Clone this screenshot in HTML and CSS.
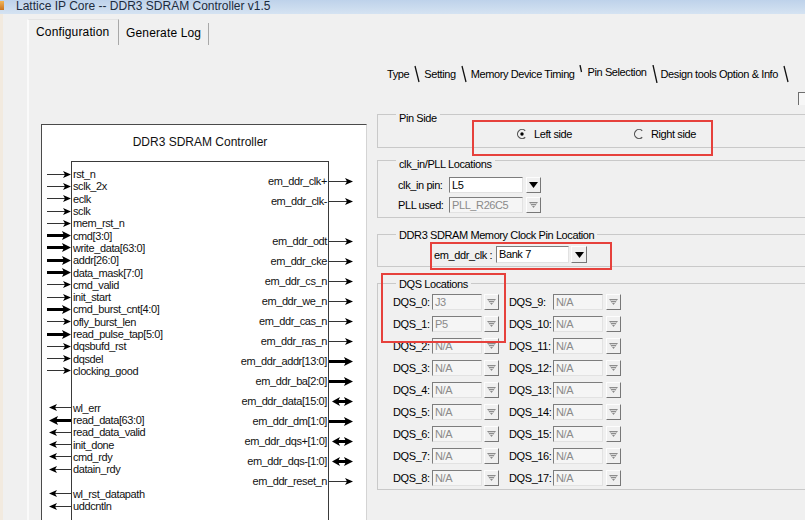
FILE: index.html
```html
<!DOCTYPE html>
<html lang="en">
<head>
<meta charset="utf-8">
<title>Lattice IP Core -- DDR3 SDRAM Controller v1.5</title>
<link rel="stylesheet" href="styles.css">
</head>
<body>
<svg class="defs" aria-hidden="true">
  <symbol id="r1" viewBox="0 0 24 11"><line x1="0" y1="5.5" x2="18" y2="5.5" stroke="#333" stroke-width="1"/><path d="M24 5.5 L16 2 L18 5.5 L16 9 Z" fill="#000"/></symbol>
  <symbol id="r3" viewBox="0 0 24 11"><line x1="0" y1="5.5" x2="17" y2="5.5" stroke="#000" stroke-width="3"/><path d="M24 5.5 L15 1 L17 5.5 L15 10 Z" fill="#000"/></symbol>
  <symbol id="l1" viewBox="0 0 24 11"><line x1="8" y1="5.5" x2="24" y2="5.5" stroke="#333" stroke-width="1"/><path d="M2 5.5 L10 2 L8 5.5 L10 9 Z" fill="#000"/></symbol>
  <symbol id="l3" viewBox="0 0 24 11"><line x1="8" y1="5.5" x2="24" y2="5.5" stroke="#000" stroke-width="3"/><path d="M2 5.5 L11 1 L9 5.5 L11 10 Z" fill="#000"/></symbol>
  <symbol id="bi" viewBox="0 0 24 11"><line x1="8" y1="5.5" x2="17" y2="5.5" stroke="#000" stroke-width="3"/><path d="M3 5.5 L11 1 L9 5.5 L11 10 Z" fill="#000"/><path d="M24 5.5 L15 1 L17 5.5 L15 10 Z" fill="#000"/></symbol>
  <symbol id="dd-on" viewBox="0 0 9 6"><path d="M0 0 H9 L4.5 6 Z" fill="#000"/></symbol>
  <symbol id="dd-off" viewBox="0 0 9 6"><path d="M0 0 H9 L4.5 6 Z" fill="#8c8c8c"/><path d="M1.5 1.5 H7.5 M3 3.5 H6" stroke="#e8e8e8" stroke-width="0.8"/></symbol>
</svg>

<div class="titlebar"><span class="ticon"></span><span class="ttext">Lattice IP Core -- DDR3 SDRAM Controller v1.5</span></div>

<div class="frame">
  <div class="edge"></div>
  <div class="main">
    <div class="tabstrip">
      <div class="tab active">Configuration</div>
      <div class="tab">Generate Log</div>
    </div>

    <div class="panel">
      <div class="leftcol">
        <div class="outer">
          <div class="dtitle">DDR3 SDRAM Controller</div>
          <div class="inner">
            <div class="lcol">
              <div class="lrow"><svg><use href="#r1"/></svg><span>rst_n</span></div>
              <div class="lrow"><svg><use href="#r1"/></svg><span>sclk_2x</span></div>
              <div class="lrow"><svg><use href="#r1"/></svg><span>eclk</span></div>
              <div class="lrow"><svg><use href="#r1"/></svg><span>sclk</span></div>
              <div class="lrow"><svg><use href="#r1"/></svg><span>mem_rst_n</span></div>
              <div class="lrow"><svg><use href="#r3"/></svg><span>cmd[3:0]</span></div>
              <div class="lrow"><svg><use href="#r3"/></svg><span>write_data[63:0]</span></div>
              <div class="lrow"><svg><use href="#r3"/></svg><span>addr[26:0]</span></div>
              <div class="lrow"><svg><use href="#r3"/></svg><span>data_mask[7:0]</span></div>
              <div class="lrow"><svg><use href="#r1"/></svg><span>cmd_valid</span></div>
              <div class="lrow"><svg><use href="#r1"/></svg><span>init_start</span></div>
              <div class="lrow"><svg><use href="#r3"/></svg><span>cmd_burst_cnt[4:0]</span></div>
              <div class="lrow"><svg><use href="#r1"/></svg><span>ofly_burst_len</span></div>
              <div class="lrow"><svg><use href="#r3"/></svg><span>read_pulse_tap[5:0]</span></div>
              <div class="lrow"><svg><use href="#r1"/></svg><span>dqsbufd_rst</span></div>
              <div class="lrow"><svg><use href="#r1"/></svg><span>dqsdel</span></div>
              <div class="lrow"><svg><use href="#r1"/></svg><span>clocking_good</span></div>
              <div class="lrow"></div>
              <div class="lrow"></div>
              <div class="lrow"><svg><use href="#l1"/></svg><span>wl_err</span></div>
              <div class="lrow"><svg><use href="#l3"/></svg><span>read_data[63:0]</span></div>
              <div class="lrow"><svg><use href="#l1"/></svg><span>read_data_valid</span></div>
              <div class="lrow"><svg><use href="#l1"/></svg><span>init_done</span></div>
              <div class="lrow"><svg><use href="#l1"/></svg><span>cmd_rdy</span></div>
              <div class="lrow"><svg><use href="#l1"/></svg><span>datain_rdy</span></div>
              <div class="lrow"></div>
              <div class="lrow"><svg><use href="#l1"/></svg><span>wl_rst_datapath</span></div>
              <div class="lrow"><svg><use href="#l1"/></svg><span>uddcntln</span></div>
            </div>
            <div class="rcol">
              <div class="rrow"><span>em_ddr_clk+</span><svg><use href="#r1"/></svg></div>
              <div class="rrow"><span>em_ddr_clk-</span><svg><use href="#r1"/></svg></div>
              <div class="rrow"></div>
              <div class="rrow"><span>em_ddr_odt</span><svg><use href="#r1"/></svg></div>
              <div class="rrow"><span>em_ddr_cke</span><svg><use href="#r1"/></svg></div>
              <div class="rrow"><span>em_ddr_cs_n</span><svg><use href="#r1"/></svg></div>
              <div class="rrow"><span>em_ddr_we_n</span><svg><use href="#r1"/></svg></div>
              <div class="rrow"><span>em_ddr_cas_n</span><svg><use href="#r1"/></svg></div>
              <div class="rrow"><span>em_ddr_ras_n</span><svg><use href="#r1"/></svg></div>
              <div class="rrow"><span>em_ddr_addr[13:0]</span><svg><use href="#r3"/></svg></div>
              <div class="rrow"><span>em_ddr_ba[2:0]</span><svg><use href="#r3"/></svg></div>
              <div class="rrow"><span>em_ddr_data[15:0]</span><svg><use href="#bi"/></svg></div>
              <div class="rrow"><span>em_ddr_dm[1:0]</span><svg><use href="#r3"/></svg></div>
              <div class="rrow"><span>em_ddr_dqs+[1:0]</span><svg><use href="#bi"/></svg></div>
              <div class="rrow"><span>em_ddr_dqs-[1:0]</span><svg><use href="#bi"/></svg></div>
              <div class="rrow"><span>em_ddr_reset_n</span><svg><use href="#r1"/></svg></div>
            </div>
          </div>
        </div>
      </div>

      <div class="rightcol">
        <div class="subtabs">
          <span class="st">Type</span><svg class="sl"><line x1="1" y1="1" x2="5" y2="17"/></svg>
          <span class="st">Setting</span><svg class="sl"><line x1="1" y1="1" x2="5" y2="17"/></svg>
          <span class="st">Memory Device Timing</span><svg class="sl short"><line x1="2" y1="0" x2="3.5" y2="7"/></svg>
          <span class="st sel">Pin Selection</span><svg class="sl tall"><line x1="1" y1="0" x2="5" y2="18"/></svg>
          <span class="st">Design tools Option &amp; Info</span><svg class="sl"><line x1="1" y1="1" x2="5" y2="17"/></svg>
        </div>
        <div class="checkrow"><span class="chk"></span></div>

        <div class="group g1">
          <div class="legend">Pin Side</div>
          <div class="radios">
            <div class="radio"><svg class="rb"><path d="M8.2 1.8 A4.5 4.5 0 1 0 8.2 8.2" fill="none" stroke="#555" stroke-width="1.2"/><circle cx="5" cy="5" r="1.7" fill="#000"/></svg><span>Left side</span></div>
            <div class="radio"><svg class="rb"><path d="M8.2 1.8 A4.5 4.5 0 1 0 8.2 8.2" fill="none" stroke="#555" stroke-width="1.2"/></svg><span>Right side</span></div>
          </div>
        </div>

        <div class="group g2">
          <div class="legend">clk_in/PLL Locations</div>
          <div class="frow first">
            <span class="flabel">clk_in pin:</span><span class="inp w74">L5</span><span class="dd"><svg><use href="#dd-on"/></svg></span>
          </div>
          <div class="frow">
            <span class="flabel">PLL used:</span><span class="inp w74 dis">PLL_R26C5</span><span class="dd"><svg><use href="#dd-off"/></svg></span>
          </div>
        </div>

        <div class="group g3">
          <div class="legend up">DDR3 SDRAM Memory Clock Pin Location</div>
          <div class="crow">
            <span class="clabel">em_ddr_clk :</span><span class="inp w73 tall">Bank 7</span><span class="dd tall"><svg><use href="#dd-on"/></svg></span>
          </div>
        </div>

        <div class="group g4">
          <div class="legend up">DQS Locations</div>
          <div class="qrow first"><span class="q1">DQS_0:</span><span class="inp w50 dis">J3</span><span class="dd d1"><svg><use href="#dd-off"/></svg></span><span class="q2">DQS_9:</span><span class="inp w50 dis">N/A</span><span class="dd d2"><svg><use href="#dd-off"/></svg></span></div>
          <div class="qrow"><span class="q1">DQS_1:</span><span class="inp w50 dis">P5</span><span class="dd d1"><svg><use href="#dd-off"/></svg></span><span class="q2">DQS_10:</span><span class="inp w50 dis">N/A</span><span class="dd d2"><svg><use href="#dd-off"/></svg></span></div>
          <div class="qrow"><span class="q1">DQS_2:</span><span class="inp w50 dis">N/A</span><span class="dd d1"><svg><use href="#dd-off"/></svg></span><span class="q2">DQS_11:</span><span class="inp w50 dis">N/A</span><span class="dd d2"><svg><use href="#dd-off"/></svg></span></div>
          <div class="qrow"><span class="q1">DQS_3:</span><span class="inp w50 dis">N/A</span><span class="dd d1"><svg><use href="#dd-off"/></svg></span><span class="q2">DQS_12:</span><span class="inp w50 dis">N/A</span><span class="dd d2"><svg><use href="#dd-off"/></svg></span></div>
          <div class="qrow"><span class="q1">DQS_4:</span><span class="inp w50 dis">N/A</span><span class="dd d1"><svg><use href="#dd-off"/></svg></span><span class="q2">DQS_13:</span><span class="inp w50 dis">N/A</span><span class="dd d2"><svg><use href="#dd-off"/></svg></span></div>
          <div class="qrow"><span class="q1">DQS_5:</span><span class="inp w50 dis">N/A</span><span class="dd d1"><svg><use href="#dd-off"/></svg></span><span class="q2">DQS_14:</span><span class="inp w50 dis">N/A</span><span class="dd d2"><svg><use href="#dd-off"/></svg></span></div>
          <div class="qrow"><span class="q1">DQS_6:</span><span class="inp w50 dis">N/A</span><span class="dd d1"><svg><use href="#dd-off"/></svg></span><span class="q2">DQS_15:</span><span class="inp w50 dis">N/A</span><span class="dd d2"><svg><use href="#dd-off"/></svg></span></div>
          <div class="qrow"><span class="q1">DQS_7:</span><span class="inp w50 dis">N/A</span><span class="dd d1"><svg><use href="#dd-off"/></svg></span><span class="q2">DQS_16:</span><span class="inp w50 dis">N/A</span><span class="dd d2"><svg><use href="#dd-off"/></svg></span></div>
          <div class="qrow"><span class="q1">DQS_8:</span><span class="inp w50 dis">N/A</span><span class="dd d1"><svg><use href="#dd-off"/></svg></span><span class="q2">DQS_17:</span><span class="inp w50 dis">N/A</span><span class="dd d2"><svg><use href="#dd-off"/></svg></span></div>
        </div>
      </div>
    </div>
  </div>
</div>

<div class="mark m1"></div>
<div class="mark m2"></div>
<div class="mark m3"></div>
</body>
</html>
```

FILE: styles.css
```css
* { box-sizing: border-box; }
html, body { margin: 0; padding: 0; }
body {
  width: 805px;
  height: 520px;
  overflow: hidden;
  position: relative;
  background: #f0f0f0;
  color: #000;
  font-family: "Liberation Sans", Arial, sans-serif;
}
.defs { position: absolute; width: 0; height: 0; overflow: hidden; }

/* title bar */
.titlebar {
  height: 14px;
  display: flex;
  align-items: flex-start;
  overflow: hidden;
  background: linear-gradient(#bed2ea, #d5e3f2);
}
.ticon {
  width: 4px;
  height: 9px;
  margin-top: 1px;
  background: linear-gradient(#f3b557, #c9731f);
}
.ttext {
  margin-left: 12px;
  margin-top: 0;
  font-size: 12px;
  line-height: 13px;
  color: #1c2b3d;
  white-space: nowrap;
}

.frame { display: flex; height: 506px; overflow: hidden; }
.edge { width: 3px; flex: none; background: #f2eadf; }
.main { flex: 1; min-width: 0; display: flex; flex-direction: column; }

/* top tabs */
.tabstrip {
  height: 31px;
  flex: none;
  display: flex;
  align-items: flex-end;
  padding-left: 24px;
}
.tab {
  font-size: 12px;
  line-height: 15px;
  letter-spacing: 0.15px;
  white-space: nowrap;
  height: 22px;
  width: 90px;
  padding: 3px 0 0 7px;
  border-right: 1px solid #a8a8a8;
}
.tab.active {
  height: 26px;
  width: 92px;
  padding: 5px 0 0 7px;
  border-left: 2px solid #fbfbfb;
  border-top: 1px solid #e4e4e4;
}

.panel {
  flex: 1;
  display: flex;
  margin-left: 24px;
  border-left: 2px solid #fafafa;
}

/* block diagram */
.leftcol { width: 348px; flex: none; padding: 79px 0 0 12px; }
.outer {
  width: 326px;
  height: 396px;
  background: #fff;
  border-top: 1px solid #4a4a4a;
  border-left: 1px solid #4a4a4a;
  border-right: 1px solid #d4d4d4;
}
.dtitle {
  width: 258px;
  margin: 10px 0 0 29px;
  text-align: center;
  font-size: 12px;
  line-height: 15px;
  color: #111;
}
.inner {
  width: 258px;
  height: 359px;
  margin: 11px 0 0 29px;
  border: 1px solid #3a3a3a;
  border-bottom: none;
  display: flex;
  justify-content: space-between;
}
.lcol { padding-top: 6px; }
.lrow, .rrow {
  display: flex;
  align-items: center;
  font-size: 11px;
  letter-spacing: -0.4px;
  white-space: nowrap;
  color: #111;
}
.lrow { height: 12.3px; }
.lrow svg { width: 24px; height: 11px; flex: none; margin: 0 2px 0 -25px; }
.rcol {
  padding-top: 9px;
  display: flex;
  flex-direction: column;
  align-items: flex-end;
}
.rrow { height: 20px; }
.rrow svg { width: 24px; height: 11px; flex: none; margin: 0 -25px 0 2px; }

/* right column */
.rightcol { flex: 1; min-width: 0; overflow: hidden; }
.subtabs {
  margin-top: 20px;
  height: 18px;
  display: flex;
  align-items: center;
  padding-left: 10px;
  font-size: 11px;
  letter-spacing: -0.4px;
  white-space: nowrap;
}
.st { line-height: 13px; }
.st.sel { margin-bottom: 4px; }
.sl { width: 6px; height: 18px; flex: none; margin: 0 4px 0 5px; }
.sl line { stroke: #111; stroke-width: 1.3; }
.sl.short { margin: 0 4px 0 3px; }
.sl.tall { margin: 0 3px 0 5px; }

.checkrow { margin-top: 9px; height: 13px; padding-left: 421px; }
.chk {
  display: block;
  width: 13px;
  height: 13px;
  border-top: 1px solid #6e6e6e;
  border-left: 1px solid #6e6e6e;
  background: #f7f7f7;
}

.group {
  border: 1px solid #c9c9c9;
  border-right: none;
  font-size: 11px;
  letter-spacing: -0.4px;
}
.legend {
  display: table;
  height: 13px;
  line-height: 13px;
  margin: -3px 0 0 18px;
  padding: 0 3px;
  background: #f0f0f0;
  white-space: nowrap;
}
.legend.up { margin-top: -6px; }

.g1 { margin-top: 9px; height: 34px; }
.radios {
  display: flex;
  align-items: center;
  height: 16px;
  margin-top: 1px;
  padding-left: 139px;
}
.radio { width: 117px; display: flex; align-items: center; }
.rb { width: 10px; height: 10px; flex: none; margin-right: 7px; }

.g2 { margin-top: 12px; height: 58px; }
.frow {
  display: flex;
  align-items: center;
  height: 16px;
  margin-top: 4px;
  padding-left: 20px;
}
.frow.first { margin-top: 6px; }
.flabel { width: 51px; white-space: nowrap; }

.inp {
  display: block;
  height: 16px;
  line-height: 14px;
  padding-left: 2px;
  background: #fff;
  border-top: 1px solid #7d7d7d;
  border-left: 1px solid #7d7d7d;
  border-right: 1px solid #e2e2e2;
  border-bottom: 1px solid #e2e2e2;
  white-space: nowrap;
  overflow: hidden;
}
.inp.dis { background: #f5f5f5; color: #8a8a8a; }
.inp.tall { height: 17px; line-height: 15px; }
.w74 { width: 74px; }
.w73 { width: 73px; }
.w50 { width: 50px; }

.dd {
  width: 15px;
  height: 16px;
  flex: none;
  margin-left: 3px;
  display: flex;
  align-items: center;
  justify-content: center;
  background: #f0f0f0;
  border-top: 1px solid #fdfdfd;
  border-left: 1px solid #fdfdfd;
  border-right: 1px solid #777;
  border-bottom: 1px solid #777;
}
.dd svg { width: 9px; height: 6px; }
.dd.tall { width: 16px; height: 17px; margin-left: 2px; }

.g3 { margin-top: 16px; height: 33px; }
.crow {
  display: flex;
  align-items: center;
  height: 17px;
  margin-top: 4px;
  padding-left: 56px;
}
.clabel { width: 62px; white-space: nowrap; }

.g4 { margin-top: 16px; height: 207px; }
.qrow {
  display: flex;
  align-items: center;
  height: 16px;
  margin-top: 6px;
  padding-left: 15px;
}
.qrow.first { margin-top: 3px; }
.q1 { width: 39px; white-space: nowrap; }
.q2 { width: 44px; margin-left: 10px; white-space: nowrap; }
.dd.d1 { margin-left: 2px; }
.dd.d2 { margin-left: 3px; }

/* red annotation boxes */
.mark { position: absolute; border: 2px solid #e6413c; }
.m1 { left: 472px; top: 120px; width: 241px; height: 36px; }
.m2 { left: 430px; top: 242px; width: 182px; height: 28px; }
.m3 { left: 381px; top: 273px; width: 125px; height: 70px; }
```
